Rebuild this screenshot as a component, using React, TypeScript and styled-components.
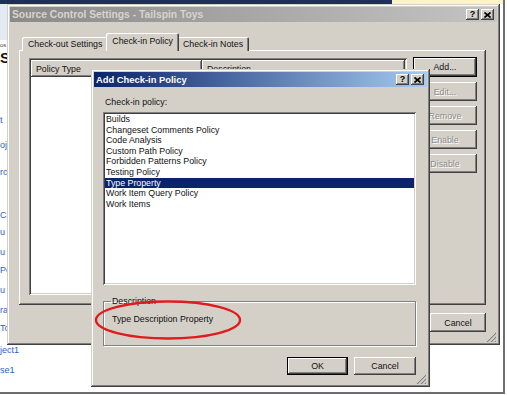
import React from 'react';
import styled, { createGlobalStyle } from 'styled-components';

const GlobalStyle = createGlobalStyle`
  html, body {
    margin: 0;
    padding: 0;
    background: #ffffff;
  }
`;

const FACE = '#d4d0c8';

const Screen = styled.div`
  position: relative;
  width: 503px;
  height: 392px;
  border-right: 2px solid #6e6e6e;
  border-bottom: 2px solid #6e6e6e;
  background: #ffffff;
  overflow: hidden;
  font-family: "Liberation Sans", Arial, sans-serif;
  font-size: 8.8px;
  color: #111;
  display: flex;
  flex-direction: column;
`;

const TopStrip = styled.div`
  display: flex;
  height: 4px;
  flex: none;
`;

const TopNavy = styled.div`
  flex: 0 0 392px;
  background: #1d2f5a;
`;

const TopTip = styled.div`
  flex: 1;
  background: #fbf3c9;
`;

const Explorer = styled.div`
  display: flex;
  flex-direction: column;
  width: 40px;
`;

const ExplorerHead = styled.div`
  height: 36px;
  background: #e3eaf3;
`;

const ExplorerSmall = styled.div`
  font-size: 6px;
  color: #444;
  margin-top: 1px;
  line-height: 9px;
`;

const ExplorerBig = styled.div`
  font-size: 15px;
  font-weight: bold;
  color: #111;
  line-height: 15px;
`;

const ExplorerItem = styled.div<{ $gap: number }>`
  margin-top: ${p => p.$gap}px;
  height: 11px;
  line-height: 11px;
  color: #2a62c9;
  font-size: 9px;
  white-space: nowrap;
`;

const Window = styled.div<{ $x: number; $y: number; $w: number; $h: number }>`
  position: absolute;
  left: ${p => p.$x}px;
  top: ${p => p.$y}px;
  width: ${p => p.$w}px;
  height: ${p => p.$h}px;
  box-sizing: border-box;
  padding: 3px;
  background: ${FACE};
  box-shadow: inset -1px -1px #404040, inset 1px 1px ${FACE}, inset -2px -2px #808080, inset 2px 2px #ffffff;
  display: flex;
  flex-direction: column;
`;

const TitleBar = styled.div<{ $active: boolean; $size: number }>`
  flex: none;
  height: 15px;
  display: flex;
  align-items: center;
  justify-content: space-between;
  padding: 0 3px 0 2px;
  background: ${p =>
    p.$active
      ? 'linear-gradient(to right, #0a246a, #a6caf0)'
      : 'linear-gradient(to right, #8a8a8a, #c4c4c4)'};
  color: ${p => (p.$active ? '#ffffff' : '#d8d4cc')};
  font-weight: bold;
  font-size: ${p => p.$size}px;
  white-space: nowrap;
`;

const CaptionButtons = styled.div`
  display: flex;
  gap: 2px;
`;

const CaptionButton = styled.div`
  width: 13px;
  height: 11px;
  box-sizing: border-box;
  background: ${FACE};
  box-shadow: inset -1px -1px #404040, inset 1px 1px #ffffff, inset -2px -2px #808080;
  display: flex;
  align-items: center;
  justify-content: center;
  color: #000;
  font-size: 9px;
  font-weight: bold;
  line-height: 1;
`;

const OuterBody = styled.div`
  flex: 1;
  display: flex;
  flex-direction: column;
  padding: 11px 11px 10px 9px;
`;

const TabStrip = styled.div`
  display: flex;
  align-items: flex-end;
  height: 18px;
  padding-left: 3px;
  margin-bottom: -1px;
  position: relative;
  z-index: 1;
`;

const Tab = styled.div<{ $selected?: boolean }>`
  height: ${p => (p.$selected ? 18 : 14)}px;
  box-sizing: border-box;
  padding: ${p => (p.$selected ? '0 6px 3px' : '0 6px 1px')};
  margin: 0 ${p => (p.$selected ? -2 : 0)}px;
  position: relative;
  z-index: ${p => (p.$selected ? 2 : 1)};
  background: ${FACE};
  border-radius: 2px 2px 0 0;
  box-shadow: inset 1px 1px #ffffff, inset -1px 0 #404040, inset -2px 0 #808080;
  display: flex;
  align-items: center;
  white-space: nowrap;
`;

const TabPanel = styled.div`
  height: 255px;
  box-sizing: border-box;
  padding: 8px 9px 10px 10px;
  display: flex;
  gap: 6px;
  box-shadow: inset -1px -1px #404040, inset 1px 1px #ffffff, inset -2px -2px #808080;
`;

const Sunken = styled.div`
  background: #ffffff;
  box-shadow: inset 1px 1px #808080, inset -1px -1px #ffffff, inset 2px 2px #404040, inset -2px -2px ${FACE};
  padding: 2px;
  box-sizing: border-box;
`;

const ListView = styled(Sunken)`
  flex: 1;
`;

const HeaderRow = styled.div`
  display: flex;
  height: 17px;
`;

const HeaderCell = styled.div<{ $w?: number }>`
  ${p => (p.$w ? `flex: 0 0 ${p.$w}px;` : 'flex: 1;')}
  background: ${FACE};
  box-shadow: inset -1px -1px #404040, inset 1px 1px #ffffff, inset -2px -2px #808080;
  display: flex;
  align-items: center;
  padding-left: 5px;
`;

const ButtonColumn = styled.div`
  display: flex;
  flex-direction: column;
  gap: 5px;
  width: 64px;
  margin-top: -1px;
`;

const Button = styled.div<{ $w?: number; $h?: number; $default?: boolean; $disabled?: boolean }>`
  width: ${p => (p.$w ? `${p.$w}px` : '100%')};
  height: ${p => p.$h ?? 19}px;
  flex: none;
  box-sizing: border-box;
  background: ${FACE};
  box-shadow: ${p =>
    p.$default
      ? `inset 0 0 0 1px #000, inset -2px -2px #404040, inset 2px 2px #ffffff, inset -3px -3px #808080`
      : `inset -1px -1px #404040, inset 1px 1px #ffffff, inset -2px -2px #808080`};
  display: flex;
  align-items: center;
  justify-content: center;
  color: ${p => (p.$disabled ? '#8c8c8c' : '#111')};
  text-shadow: ${p => (p.$disabled ? '1px 1px 0 #ffffff' : 'none')};
`;

const Footer = styled.div`
  display: flex;
  justify-content: flex-end;
  gap: 6px;
  margin-top: 8px;
`;

const GripBox = styled.svg`
  position: absolute;
  right: 4px;
  bottom: 3px;
`;

const InnerBody = styled.div`
  flex: 1;
  display: flex;
  flex-direction: column;
  padding: 10px 11px 9px 9px;
`;

const Label = styled.div`
  height: 11px;
  line-height: 11px;
  padding-left: 2px;
  margin-bottom: 4px;
`;

const ListBox = styled(Sunken)`
  height: 173px;
  display: flex;
  flex-direction: column;
`;

const ListItem = styled.div<{ $selected?: boolean }>`
  height: 10.6px;
  line-height: 10.6px;
  padding-left: 1px;
  white-space: nowrap;
  background: ${p => (p.$selected ? '#0a246a' : 'transparent')};
  color: ${p => (p.$selected ? '#ffffff' : '#111')};
`;

const GroupBox = styled.fieldset`
  margin: 11px 0 0;
  height: 50px;
  box-sizing: border-box;
  border: 1px solid #808080;
  box-shadow: 1px 1px 0 #ffffff, inset 1px 1px 0 #ffffff;
  padding: 8px 8px 6px;
  min-width: 0;
`;

const Legend = styled.legend`
  padding: 0 1px;
  margin-left: -1px;
  font-size: 8.8px;
  line-height: 10px;
`;

const GroupText = styled.div`
  line-height: 11px;
`;

const InnerFooter = styled.div`
  display: flex;
  justify-content: flex-end;
  gap: 6px;
  margin-top: 11px;
`;

const Annotation = styled.svg`
  position: absolute;
  left: 93px;
  top: 299px;
  pointer-events: none;
`;

const CloseGlyph = () => (
  <svg width="7" height="6" viewBox="0 0 7 6">
    <path d="M0.5 0.5 L6.5 5.5 M6.5 0.5 L0.5 5.5" stroke="#000" strokeWidth="1.7" />
  </svg>
);

const Grip = () => (
  <GripBox width="11" height="11" viewBox="0 0 11 11">
    <path d="M10 2 L2 10 M10 6 L6 10" stroke="#ffffff" strokeWidth="1" />
    <path d="M11 2 L2 11 M11 6 L6 11 M11 10 L10 11" stroke="#808080" strokeWidth="1.2" />
  </GripBox>
);

const policies = [
  'Builds',
  'Changeset Comments Policy',
  'Code Analysis',
  'Custom Path Policy',
  'Forbidden Patterns Policy',
  'Testing Policy',
  'Type Property',
  'Work Item Query Policy',
  'Work Items',
];

const explorerItems: [string, number][] = [
  ['t', 50],
  ['oj', 14],
  ['rc', 16],
  ['C', 32],
  ['u', 6],
  ['u', 9],
  ['Po', 7],
  ['u', 9],
  ['ra', 9],
  ['To', 7],
  ['ject1', 11],
  ['se1', 9],
];

export default function App() {
  return (
    <>
      <GlobalStyle />
      <Screen>
        <TopStrip>
          <TopNavy />
          <TopTip />
        </TopStrip>
        <Explorer>
          <ExplorerHead />
          <ExplorerSmall>os</ExplorerSmall>
          <ExplorerBig>S</ExplorerBig>
          {explorerItems.map(([t, g], i) => (
            <ExplorerItem key={i} $gap={g}>
              {t}
            </ExplorerItem>
          ))}
        </Explorer>

        <Window $x={7} $y={4} $w={493} $h={341}>
          <TitleBar $active={false} $size={10.3}>
            <span>Source Control Settings - Tailspin Toys</span>
            <CaptionButtons>
              <CaptionButton>?</CaptionButton>
              <CaptionButton>
                <CloseGlyph />
              </CaptionButton>
            </CaptionButtons>
          </TitleBar>
          <OuterBody>
            <TabStrip>
              <Tab>Check-out Settings</Tab>
              <Tab $selected>Check-in Policy</Tab>
              <Tab>Check-in Notes</Tab>
            </TabStrip>
            <TabPanel>
              <ListView>
                <HeaderRow>
                  <HeaderCell $w={166}>Policy Type</HeaderCell>
                  <HeaderCell>Description</HeaderCell>
                </HeaderRow>
              </ListView>
              <ButtonColumn>
                <Button $default $h={20}>Add...</Button>
                <Button $disabled>Edit...</Button>
                <Button $disabled>Remove</Button>
                <Button $disabled>Enable</Button>
                <Button $disabled>Disable</Button>
              </ButtonColumn>
            </TabPanel>
            <Footer>
              <Button $w={56}>OK</Button>
              <Button $w={56}>Cancel</Button>
            </Footer>
          </OuterBody>
          <Grip />
        </Window>

        <Window $x={91} $y={69} $w={339} $h={318}>
          <TitleBar $active $size={9.4}>
            <span>Add Check-in Policy</span>
            <CaptionButtons>
              <CaptionButton>?</CaptionButton>
              <CaptionButton>
                <CloseGlyph />
              </CaptionButton>
            </CaptionButtons>
          </TitleBar>
          <InnerBody>
            <Label>Check-in policy:</Label>
            <ListBox>
              {policies.map(p => (
                <ListItem key={p} $selected={p === 'Type Property'}>
                  {p}
                </ListItem>
              ))}
            </ListBox>
            <GroupBox>
              <Legend>Description</Legend>
              <GroupText>Type Description Property</GroupText>
            </GroupBox>
            <InnerFooter>
              <Button $w={61} $h={18} $default>OK</Button>
              <Button $w={62} $h={18}>Cancel</Button>
            </InnerFooter>
          </InnerBody>
          <Grip />
        </Window>

        <Annotation width="152" height="44" viewBox="0 0 152 44">
          <ellipse cx="75" cy="21" rx="72" ry="18.5" fill="none" stroke="#e01b1b" strokeWidth="2.4" />
        </Annotation>
      </Screen>
    </>
  );
}
